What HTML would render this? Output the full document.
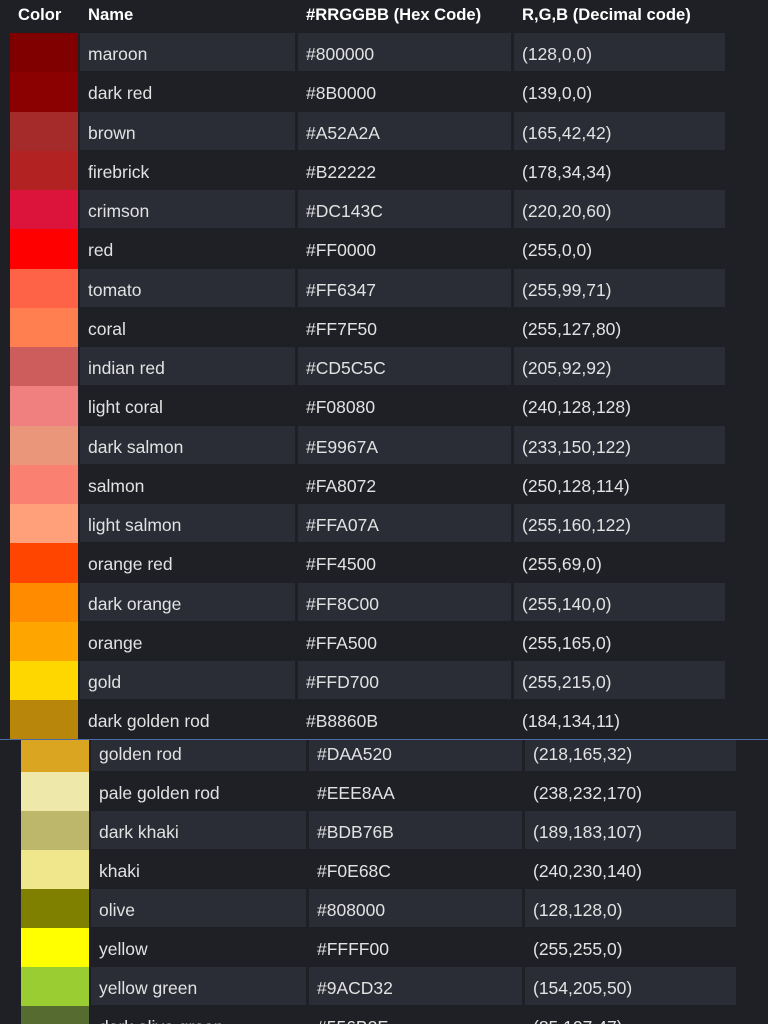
<!DOCTYPE html>
<html><head><meta charset="utf-8"><style>
body{margin:0;width:768px;height:1024px;background:#1e2025;overflow:hidden;font-family:"Liberation Sans","DejaVu Sans",sans-serif;color:#e2e2e2;font-size:17.5px;position:relative}
.hdr{position:absolute;top:0;height:30px;line-height:30px;font-weight:bold;color:#fff;font-size:16.6px}
.tbl{position:absolute;left:0;width:768px}
.r{position:relative;height:39.25px}
.r div{position:absolute;top:0;bottom:1px;line-height:42px;padding-left:8px;box-sizing:border-box;white-space:nowrap;overflow:hidden}
.s{left:10px;width:68px;bottom:0!important}
.n{left:80px;width:215px}
.h{left:298px;width:213px}
.g{left:514px;width:211px}
.l .n,.l .h,.l .g{background:#2a2d36}
#p2{top:740px;height:284px;overflow:hidden}
#p2 .in{position:absolute;top:-7px;left:11px;width:768px}
#p2 .r{height:39px}
.line{position:absolute;top:739px;left:0;width:768px;height:1px;background:#4a6aa8}
</style></head><body>
<div class="hdr" style="left:18px">Color</div>
<div class="hdr" style="left:88px">Name</div>
<div class="hdr" style="left:306px">#RRGGBB (Hex Code)</div>
<div class="hdr" style="left:522px">R,G,B (Decimal code)</div>
<div class="tbl" style="top:33px">
<div class="r l"><div class="s" style="background:#800000"></div><div class="n">maroon</div><div class="h">#800000</div><div class="g">(128,0,0)</div></div>
<div class="r"><div class="s" style="background:#8B0000"></div><div class="n">dark red</div><div class="h">#8B0000</div><div class="g">(139,0,0)</div></div>
<div class="r l"><div class="s" style="background:#A52A2A"></div><div class="n">brown</div><div class="h">#A52A2A</div><div class="g">(165,42,42)</div></div>
<div class="r"><div class="s" style="background:#B22222"></div><div class="n">firebrick</div><div class="h">#B22222</div><div class="g">(178,34,34)</div></div>
<div class="r l"><div class="s" style="background:#DC143C"></div><div class="n">crimson</div><div class="h">#DC143C</div><div class="g">(220,20,60)</div></div>
<div class="r"><div class="s" style="background:#FF0000"></div><div class="n">red</div><div class="h">#FF0000</div><div class="g">(255,0,0)</div></div>
<div class="r l"><div class="s" style="background:#FF6347"></div><div class="n">tomato</div><div class="h">#FF6347</div><div class="g">(255,99,71)</div></div>
<div class="r"><div class="s" style="background:#FF7F50"></div><div class="n">coral</div><div class="h">#FF7F50</div><div class="g">(255,127,80)</div></div>
<div class="r l"><div class="s" style="background:#CD5C5C"></div><div class="n">indian red</div><div class="h">#CD5C5C</div><div class="g">(205,92,92)</div></div>
<div class="r"><div class="s" style="background:#F08080"></div><div class="n">light coral</div><div class="h">#F08080</div><div class="g">(240,128,128)</div></div>
<div class="r l"><div class="s" style="background:#E9967A"></div><div class="n">dark salmon</div><div class="h">#E9967A</div><div class="g">(233,150,122)</div></div>
<div class="r"><div class="s" style="background:#FA8072"></div><div class="n">salmon</div><div class="h">#FA8072</div><div class="g">(250,128,114)</div></div>
<div class="r l"><div class="s" style="background:#FFA07A"></div><div class="n">light salmon</div><div class="h">#FFA07A</div><div class="g">(255,160,122)</div></div>
<div class="r"><div class="s" style="background:#FF4500"></div><div class="n">orange red</div><div class="h">#FF4500</div><div class="g">(255,69,0)</div></div>
<div class="r l"><div class="s" style="background:#FF8C00"></div><div class="n">dark orange</div><div class="h">#FF8C00</div><div class="g">(255,140,0)</div></div>
<div class="r"><div class="s" style="background:#FFA500"></div><div class="n">orange</div><div class="h">#FFA500</div><div class="g">(255,165,0)</div></div>
<div class="r l"><div class="s" style="background:#FFD700"></div><div class="n">gold</div><div class="h">#FFD700</div><div class="g">(255,215,0)</div></div>
<div class="r"><div class="s" style="background:#B8860B"></div><div class="n">dark golden rod</div><div class="h">#B8860B</div><div class="g">(184,134,11)</div></div>
</div>
<div class="line"></div>
<div class="tbl" id="p2"><div class="in">
<div class="r l"><div class="s" style="background:#DAA520"></div><div class="n">golden rod</div><div class="h">#DAA520</div><div class="g">(218,165,32)</div></div>
<div class="r"><div class="s" style="background:#EEE8AA"></div><div class="n">pale golden rod</div><div class="h">#EEE8AA</div><div class="g">(238,232,170)</div></div>
<div class="r l"><div class="s" style="background:#BDB76B"></div><div class="n">dark khaki</div><div class="h">#BDB76B</div><div class="g">(189,183,107)</div></div>
<div class="r"><div class="s" style="background:#F0E68C"></div><div class="n">khaki</div><div class="h">#F0E68C</div><div class="g">(240,230,140)</div></div>
<div class="r l"><div class="s" style="background:#808000"></div><div class="n">olive</div><div class="h">#808000</div><div class="g">(128,128,0)</div></div>
<div class="r"><div class="s" style="background:#FFFF00"></div><div class="n">yellow</div><div class="h">#FFFF00</div><div class="g">(255,255,0)</div></div>
<div class="r l"><div class="s" style="background:#9ACD32"></div><div class="n">yellow green</div><div class="h">#9ACD32</div><div class="g">(154,205,50)</div></div>
<div class="r"><div class="s" style="background:#556B2F"></div><div class="n">dark olive green</div><div class="h">#556B2F</div><div class="g">(85,107,47)</div></div>
</div></div>
</body></html>
